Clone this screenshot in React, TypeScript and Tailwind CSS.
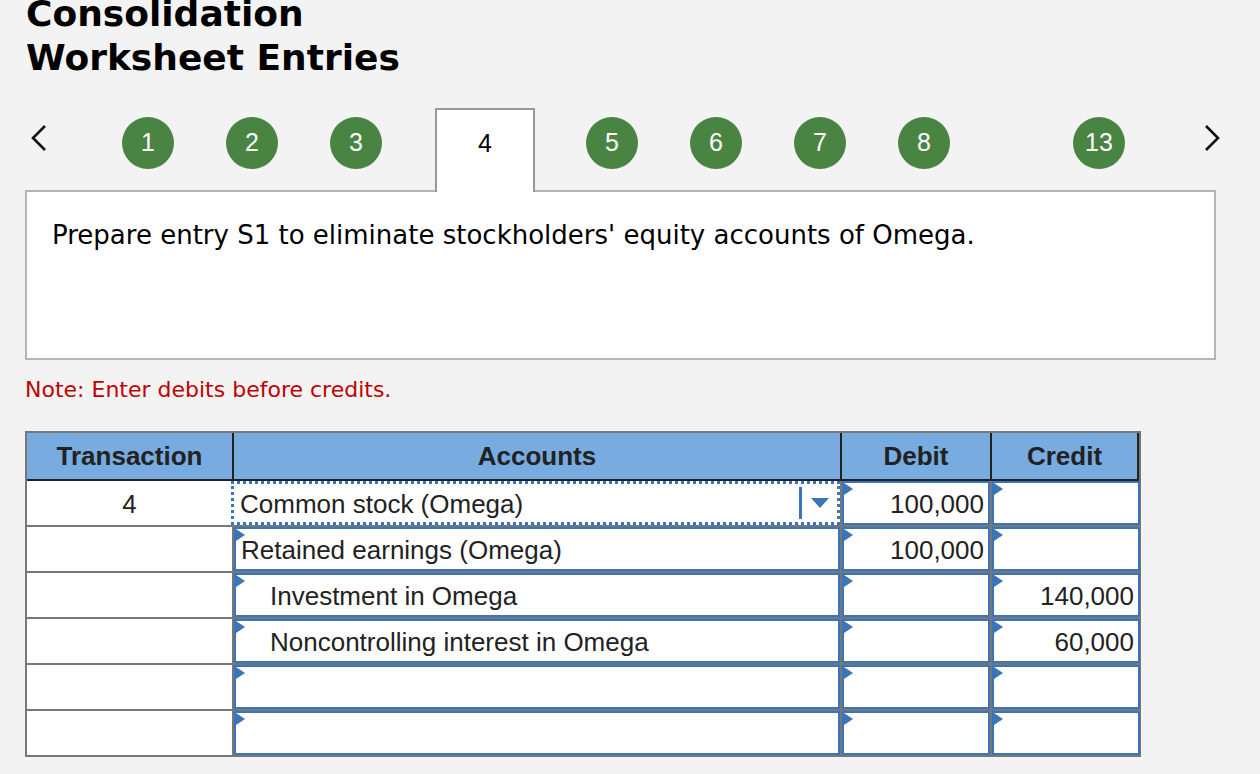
import React from "react";

type Row = {
  tx: string;
  account: string;
  indent?: boolean;
  debit: string;
  credit: string;
};

const rows: Row[] = [
  { tx: "4", account: "Common stock (Omega)", debit: "100,000", credit: "" },
  { tx: "", account: "Retained earnings (Omega)", debit: "100,000", credit: "" },
  { tx: "", account: "Investment in Omega", indent: true, debit: "", credit: "140,000" },
  { tx: "", account: "Noncontrolling interest in Omega", indent: true, debit: "", credit: "60,000" },
  { tx: "", account: "", debit: "", credit: "" },
  { tx: "", account: "", debit: "", credit: "" },
];

function Marker() {
  return (
    <svg className="absolute left-0 top-0" width="9" height="12" viewBox="0 0 9 12">
      <polygon points="0,0 9,6 0,12" fill="#3a75b9" />
    </svg>
  );
}

function Step({ n }: { n: string }) {
  return (
    <div className="flex w-[104px] justify-center pt-[9px]">
      <div className="flex h-[52px] w-[52px] items-center justify-center rounded-full bg-[#4a8443] text-[25px] text-white font-['Liberation_Sans',Arial,sans-serif]">
        {n}
      </div>
    </div>
  );
}

function Chevron({ dir }: { dir: "left" | "right" }) {
  return (
    <svg width="22" height="28" viewBox="0 0 22 28">
      <polyline
        points={dir === "left" ? "17,2 5,14 17,26" : "5,2 17,14 5,26"}
        fill="none"
        stroke="#111"
        strokeWidth="2.6"
      />
    </svg>
  );
}

export default function App() {
  const arial = "font-['Liberation_Sans',Arial,sans-serif]";
  return (
    <div className="min-h-[774px] w-[1260px] overflow-hidden bg-[#f3f3f3] font-['DejaVu_Sans',Verdana,sans-serif] text-black">
      <h1 className="ml-[26px] mt-[-8px] text-[36px] font-bold leading-[44px]">
        Consolidation
        <br />
        Worksheet Entries
      </h1>

      {/* step tabs */}
      <div className="mt-[28px] flex h-[82px] items-start">
        <div className="flex w-[96px] justify-start pl-[28px] pt-[16px]">
          <Chevron dir="left" />
        </div>
        <Step n="1" />
        <Step n="2" />
        <Step n="3" />
        <div className="relative z-10 ml-[27px] flex h-[84px] w-[100px] justify-center border-2 border-b-0 border-[#999] bg-white pt-[15px] text-[25px] font-['Liberation_Sans',Arial,sans-serif]">
          4
        </div>
        <div className="ml-[25px] flex">
          <Step n="5" />
          <Step n="6" />
          <Step n="7" />
          <Step n="8" />
        </div>
        <div className="ml-[71px]">
          <Step n="13" />
        </div>
        <div className="ml-[50px] pt-[16px]">
          <Chevron dir="right" />
        </div>
      </div>

      <div className="ml-[25px] h-[170px] w-[1191px] border-2 border-[#b5b5b5] bg-white pl-[25px] pt-[26px] text-[26px] leading-[34px]">
        Prepare entry S1 to eliminate stockholders' equity accounts of Omega.
      </div>

      <p className="ml-[25px] mt-[15px] text-[22px] leading-[30px] text-[#c00000]">
        Note: Enter debits before credits.
      </p>

      {/* journal table */}
      <div className={`ml-[25px] mt-[26px] w-[1116px] border-2 border-[#777] ${arial} text-[26px] text-[#222]`}>
        <div className="flex h-[48px] border-b-2 border-[#222] bg-[#78abe0] font-bold">
          <div className="flex w-[207px] items-center justify-center border-r-2 border-[#222]">Transaction</div>
          <div className="flex w-[608px] items-center justify-center border-r-2 border-[#222]">Accounts</div>
          <div className="flex w-[150px] items-center justify-center border-r-2 border-[#222]">Debit</div>
          <div className="flex w-[147px] items-center justify-center border-r-2 border-[#222]">Credit</div>
        </div>
        <div className="grid grid-cols-[205px_606px_148px_148px] gap-[2px] bg-[#777]">
          {rows.map((r, i) => (
            <React.Fragment key={i}>
              <div className="flex h-[44px] items-center justify-center bg-white pt-[3px]">{r.tx}</div>
              {i === 0 ? (
                <div className="relative -ml-[3px] flex h-[44px] items-center border-[3px] border-dotted border-[#3a75b9] bg-white pl-[6px]">
                  <span className="flex-1 pt-[3px]">{r.account}</span>
                  <div className="flex h-[32px] w-[38px] items-center justify-center border-l-[3px] border-[#3a75b9]">
                    <svg width="18" height="10" viewBox="0 0 18 10">
                      <polygon points="0,0 18,0 9,10" fill="#3a75b9" />
                    </svg>
                  </div>
                </div>
              ) : (
                <div className={`relative flex h-[44px] items-center border-2 border-[#3a75b9] bg-white pt-[3px] ${r.indent ? "pl-[34px]" : "pl-[5px]"}`}>
                  <Marker />
                  {r.account}
                </div>
              )}
              <div className="relative flex h-[44px] items-center justify-end border-2 border-[#3a75b9] bg-white pr-[4px] pt-[3px]">
                <Marker />
                {r.debit}
              </div>
              <div className="relative flex h-[44px] items-center justify-end border-2 border-[#3a75b9] bg-white pr-[4px] pt-[3px]">
                <Marker />
                {r.credit}
              </div>
            </React.Fragment>
          ))}
        </div>
      </div>
    </div>
  );
}
